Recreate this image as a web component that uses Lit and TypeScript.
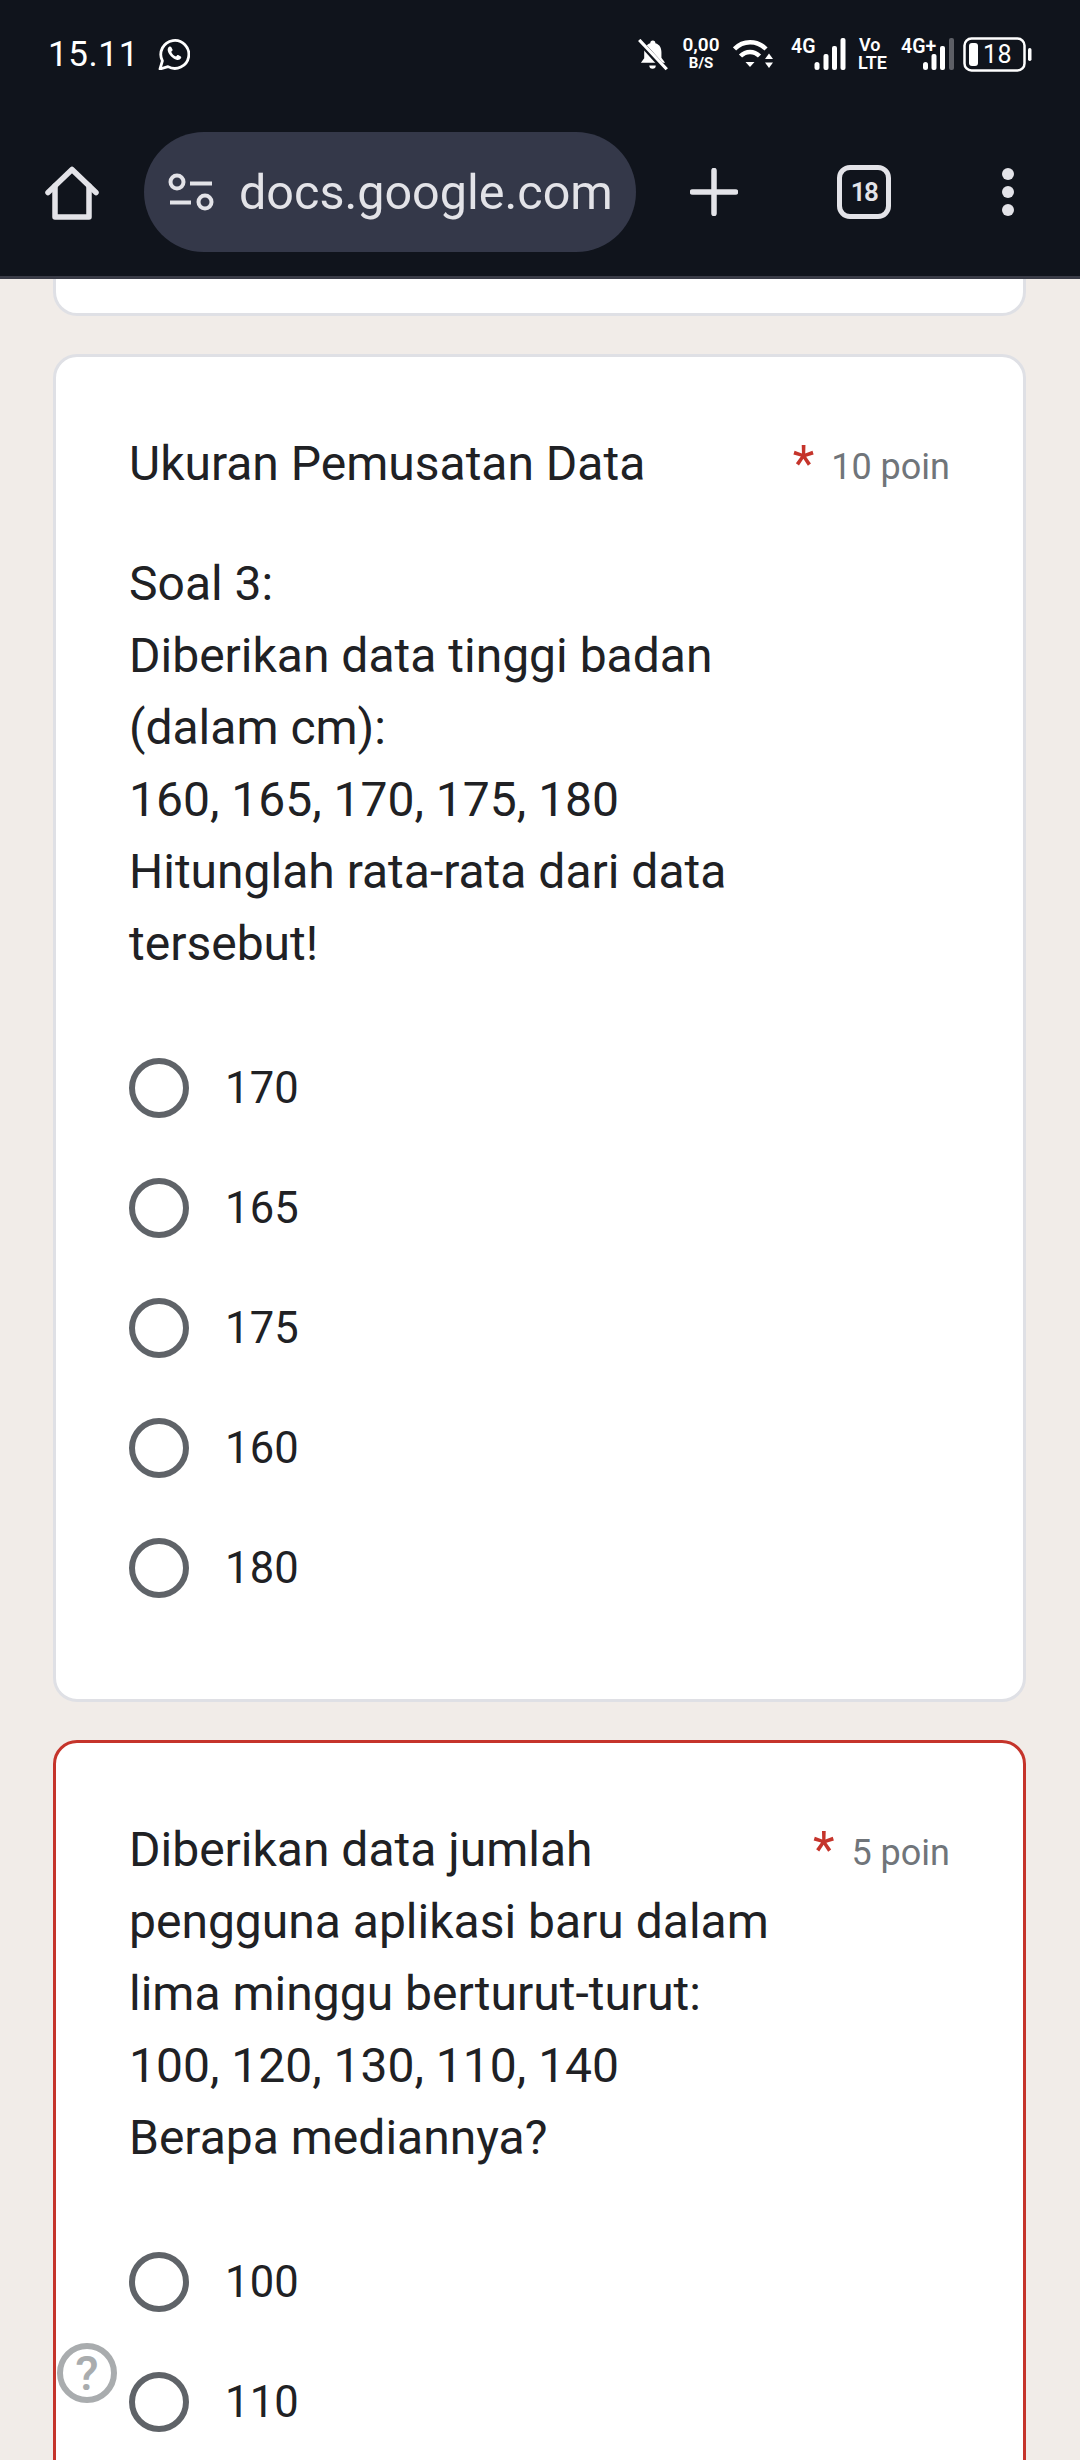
import { LitElement, html, css } from "lit";
import { customElement } from "lit/decorators.js";

const card2 = ["Soal 3:", "Diberikan data tinggi badan", "(dalam cm):", "160, 165, 170, 175, 180", "Hitunglah rata-rata dari data", "tersebut!"];
const card3 = ["Diberikan data jumlah", "pengguna aplikasi baru dalam", "lima minggu berturut-turut:", "100, 120, 130, 110, 140", "Berapa mediannya?"];

@customElement("app-root")
export class AppRoot extends LitElement {
  static styles = css`
    :host { display: block; width: 1080px; height: 2460px; overflow: hidden; position: relative; background: #f1ece8; font-family: Roboto, "Liberation Sans", sans-serif; color: #202124; }
    .top { background: #10141c; height: 276px; border-bottom: 3px solid #3a3c47; box-sizing: content-box; display: flex; flex-direction: column; }
    .status { height: 108px; display: flex; align-items: center; position: relative; color: #fff; }
    .time { font-size: 35px; margin-left: 48px; letter-spacing: 0.6px; line-height: 1; }
    .wa { margin-left: 19px; width: 32px; height: 32px; display: block; }
    .speed { position: absolute; left: 679px; top: 35px; width: 44px; text-align: center; line-height: 1; }
    .speed .a { font-size: 19px; display: block; height: 20px; line-height: 20px; font-weight: 600; }
    .speed .b { font-size: 15px; display: block; height: 16px; line-height: 16px; font-weight: 700; }
    .abs { position: absolute; display: block; }
    .net { font-size: 19.500px; font-weight: 600; line-height: 22px; top: 36px; }
    .volte { font-size: 18px; font-weight: 600; line-height: 18px; top: 36px; left: 858px; }
    .batt-n { left: 983px; top: 38px; font-size: 25px; line-height: 34px; font-weight: 400; letter-spacing: 0.500px; }
    .tbar { flex: 1; position: relative; }
    .home { position: absolute; left: 44px; top: 57px; }
    .pill { position: absolute; left: 144px; top: 24px; width: 492px; height: 120px; border-radius: 60px; background: #343849; display: flex; align-items: center; color: #e3e3e8; }
    .pill svg { margin-left: 24px; display: block; }
    .url { font-size: 48.500px; margin-left: 25px; margin-top: 2px; white-space: nowrap; line-height: 1; }
    .plus { position: absolute; left: 690px; top: 60px; }
    .tabs { position: absolute; left: 837px; top: 57px; width: 54px; height: 54px; box-sizing: border-box; border: 5px solid #e3e3e8; border-radius: 13px; color: #e3e3e8; font-size: 26px; font-weight: 600; letter-spacing: -1.500px; display: flex; align-items: center; justify-content: center; }
    .dots { position: absolute; left: 996px; top: 60px; }
    .stub { height: 37px; margin: 0 54px 0 53px; background: #fff; border: 3px solid #dfe0e5; border-top: none; border-radius: 0 0 24px 24px; box-sizing: border-box; }
    .card { background: #fff; border: 3px solid #dfe0e5; border-radius: 24px; margin: 38px 54px 0 53px; padding: 71px 73px; box-sizing: border-box; }
    .card.err { border-color: #c5342b; }
    .qhead { display: flex; align-items: flex-start; }
    .qtitle { flex: 1; font-size: 48px; line-height: 72px; white-space: nowrap; }
    .req { color: #c5342b; font-size: 50px; line-height: 72px; margin-right: 17px; }
    .pts { font-size: 36px; color: #70757a; line-height: 72px; margin-top: 3px; white-space: nowrap; }
    .body { font-size: 48px; line-height: 72px; margin-top: 45px; }
    .opts { margin-top: 48px; }
    .opt { height: 120px; display: flex; align-items: center; }
    .radio { width: 60px; height: 60px; box-sizing: border-box; border: 6px solid #5f6368; border-radius: 50%; }
    .opt span { font-size: 43.500px; margin-left: 36px; letter-spacing: 0.2px; }
    .help { position: absolute; left: 57px; top: 2343px; display: block; }
  `;

  renderOpts(list: string[]) {
    return html`<div class="opts">${list.map((o) => html`<div class="opt"><div class="radio"></div><span>${o}</span></div>`)}</div>`;
  }

  render() {
    return html`
      <div class="top">
        <div class="status">
          <div class="time">15.11</div>
          <svg class="wa" viewBox="0 0 32 32"><path d="M2 31 l2.400-8.200 A14 14 0 1 1 10 28.600 Z" fill="none" stroke="#fff" stroke-width="2.800" stroke-linejoin="round"/><path d="M11.500 8.600 c-1.600 1-2.200 2.600-1.600 4.600 1.200 3.800 4.800 7.400 8.600 8.600 2 .6 3.700-.2 4.600-1.800 .3-.6 .2-1.200-.3-1.500 l-2.600-1.400 c-.5-.2-.9-.1-1.200.3 l-1 1.200 c-2.200-.8-4-2.600-4.800-4.800 l1.100-1 c.4-.4 .4-.8.2-1.200 l-1.300-2.600 c-.3-.6-1.200-.8-1.700-.4 z" fill="#fff"/></svg>
          <svg class="abs" style="left:638px;top:39px" width="30" height="33" viewBox="0 0 32 36"><path d="M13 4.500 a2.800 2.800 0 0 1 5.600 0 c5 1.400 6.600 5.400 6.600 10 v6 l4 5.500 H2.800 l3.600-5 v-6.500 c0-4.600 2-8.600 6.600-10 z" fill="#fff"/><path d="M12 29 h7 a3.500 3.500 0 0 1-7 0 z" fill="#fff"/><path d="M-1 0 L27 31" stroke="#10141c" stroke-width="6"/><path d="M1 1 L31 33" stroke="#fff" stroke-width="3.500"/></svg>
          <div class="speed"><span class="a">0,00</span><span class="b">B/S</span></div>
          <svg class="abs" style="left:733px;top:39px" width="42" height="32" viewBox="0 0 42 32" fill="none" stroke="#fff"><path d="M1.500 10 C10 1 24 1 33 10" stroke-width="4.500"/><path d="M7.500 17 C13 11.500 21 11.500 26.500 17" stroke-width="4.500"/><path d="M12.500 23 H21.500 L17 28 Z" fill="#fff" stroke="none"/><path d="M32 20 h8 l-4 -5.500 z" fill="#fff" stroke="none"/><path d="M32 23.500 h8 l-4 5.500 z" fill="#fff" stroke="none"/></svg>
          <div class="abs net" style="left:791px">4G</div>
          <svg class="abs" style="left:814px;top:38px" width="32" height="32" viewBox="0 0 32 32" fill="#fff"><rect x="0.500" y="24" width="5" height="8" rx="2.500"/><rect x="9.500" y="16" width="5" height="16" rx="2"/><rect x="18" y="8" width="5" height="24" rx="2"/><rect x="26.500" y="0" width="5" height="32" rx="2"/></svg>
          <div class="abs volte"><span style="margin-left:1px">Vo</span><br />LTE</div>
          <div class="abs net" style="left:901px">4G+</div>
          <svg class="abs" style="left:922px;top:38px" width="34" height="32" viewBox="0 0 34 32" fill="#fff"><rect x="1" y="24" width="5" height="8" rx="2.500"/><rect x="9.500" y="16" width="5" height="16" rx="2"/><rect x="18" y="8" width="5" height="24" rx="2"/><rect x="27" y="0" width="5" height="32" rx="2" fill="#5d5f66"/></svg>
          <svg class="abs" style="left:963px;top:37px" width="70" height="35" viewBox="0 0 70 35"><rect x="1.500" y="1.500" width="60" height="32" rx="7" fill="none" stroke="#fff" stroke-width="2.500"/><rect x="6" y="6" width="9" height="23" rx="3" fill="#fff"/><rect x="65" y="11" width="3.500" height="13" rx="1.700" fill="#fff"/></svg>
          <div class="abs batt-n">18</div>
        </div>
        <div class="tbar">
          <svg class="home" width="56" height="56" viewBox="0 0 56 56" fill="none" stroke="#e3e3e8" stroke-width="5.500" stroke-linejoin="round" stroke-linecap="round"><path d="M4 27.500 L28 4.500 L52 27.500"/><path d="M11 21 V52 H45 V21"/></svg>
          <div class="pill">
            <svg width="46" height="38" viewBox="0 0 46 38" fill="none" stroke="#e3e3e8" stroke-width="4"><circle cx="9" cy="9" r="6.500"/><path d="M22 10.500 H44"/><path d="M2 29.500 H23"/><circle cx="37" cy="29" r="6.500"/></svg>
            <div class="url">docs.google.com</div>
          </div>
          <svg class="plus" width="48" height="48" viewBox="0 0 48 48" stroke="#e3e3e8" stroke-width="5.500" stroke-linecap="round"><path d="M24 2.500 V45.500 M2.500 24 H45.500"/></svg>
          <div class="tabs">18</div>
          <svg class="dots" width="24" height="48" viewBox="0 0 24 48" fill="#e3e3e8"><circle cx="12" cy="6" r="6"/><circle cx="12" cy="24" r="6"/><circle cx="12" cy="42" r="6"/></svg>
        </div>
      </div>
      <div class="stub"></div>
      <div class="card">
        <div class="qhead"><div class="qtitle">Ukuran Pemusatan Data</div><div class="req">*</div><div class="pts">10 poin</div></div>
        <div class="body">${card2.map((l) => html`<div>${l}</div>`)}</div>
        ${this.renderOpts(["170", "165", "175", "160", "180"])}
      </div>
      <div class="card err">
        <div class="qhead">
          <div class="qtitle">${card3.map((l) => html`<div>${l}</div>`)}</div>
          <div class="req">*</div><div class="pts">5 poin</div>
        </div>
        ${this.renderOpts(["100", "110"])}
      </div>
      <svg class="help" width="60" height="60" viewBox="0 0 60 60"><circle cx="30" cy="30" r="27" fill="none" stroke="#a9acae" stroke-width="6"/><text x="30" y="47" text-anchor="middle" font-family="Roboto" font-size="48" font-weight="500" fill="#a9acae">?</text></svg>
    `;
  }
}
